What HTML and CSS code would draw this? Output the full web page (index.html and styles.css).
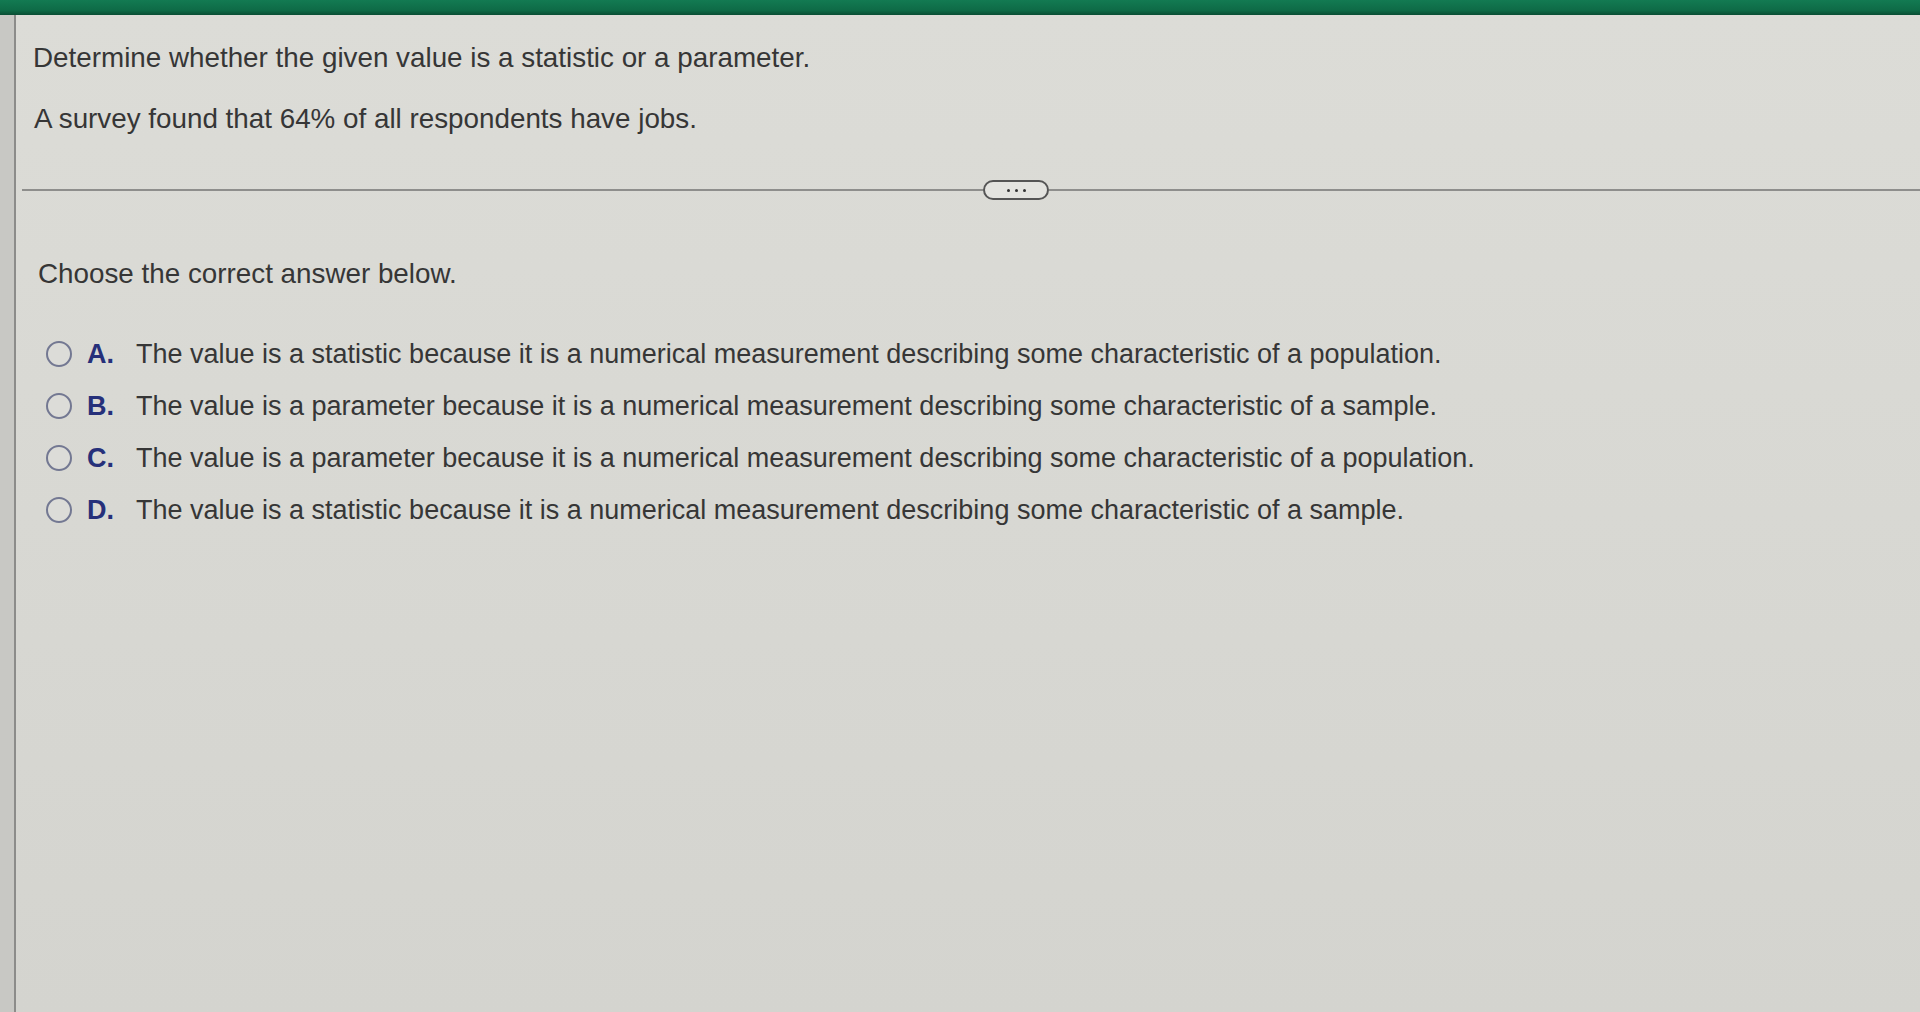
FILE: index.html
```html
<!DOCTYPE html>
<html>
<head>
<meta charset="utf-8">
<link rel="stylesheet" href="styles.css">
</head>
<body>
<div class="topbar"></div>
<div class="frame">
  <div class="edge"></div>
  <div class="content">
    <p class="line header">Determine whether the given value is a statistic or a parameter.</p>
    <p class="line survey">A survey found that 64% of all respondents have jobs.</p>
    <div class="divider">
      <span class="rule rule-left"></span>
      <span class="pill"><i></i><i></i><i></i></span>
      <span class="rule rule-right"></span>
    </div>
    <p class="line choose">Choose the correct answer below.</p>
    <div class="options">
      <div class="option"><span class="radio"></span><span class="letter">A.</span><span class="text">The value is a statistic because it is a numerical measurement describing some characteristic of a population.</span></div>
      <div class="option"><span class="radio"></span><span class="letter">B.</span><span class="text">The value is a parameter because it is a numerical measurement describing some characteristic of a sample.</span></div>
      <div class="option"><span class="radio"></span><span class="letter">C.</span><span class="text">The value is a parameter because it is a numerical measurement describing some characteristic of a population.</span></div>
      <div class="option"><span class="radio"></span><span class="letter">D.</span><span class="text">The value is a statistic because it is a numerical measurement describing some characteristic of a sample.</span></div>
    </div>
  </div>
</div>
</body>
</html>
```

FILE: styles.css
```css
html, body {
  margin: 0;
  padding: 0;
  height: 100%;
}
body {
  background: #d7d7d2;
  font-family: "Liberation Sans", Arial, sans-serif;
  color: #363636;
  overflow: hidden;
}
.topbar {
  height: 15px;
  background: linear-gradient(to bottom, #137a52 0%, #0e6a46 70%, #0a4e34 100%);
}
.frame {
  display: flex;
  height: calc(100% - 15px);
  background: linear-gradient(to bottom, #dcdcd7 0%, #d8d8d3 50%, #d4d4cf 100%);
}
.edge {
  width: 14px;
  flex: none;
  background: #c8c8c4;
  border-right: 2px solid #8c8c8a;
}
.content {
  flex: 1;
  padding-top: 27px;
}
.line {
  margin: 0;
  font-size: 27.8px;
  line-height: 32px;
}
.header {
  padding-left: 17px;
}
.survey {
  margin-top: 29px;
  padding-left: 18px;
}
.divider {
  display: flex;
  align-items: center;
  margin-top: 46px;
  padding-left: 6px;
  height: 18px;
}
.rule {
  height: 2px;
  background: #8e8e8c;
}
.rule-left {
  width: 961px;
}
.rule-right {
  flex: 1;
}
.pill {
  width: 62px;
  height: 16px;
  border: 2px solid #555555;
  border-radius: 10px;
  background: #e4e4e0;
  display: flex;
  align-items: center;
  justify-content: center;
  gap: 5px;
}
.pill i {
  width: 3px;
  height: 3px;
  border-radius: 50%;
  background: #333333;
}
.choose {
  margin-top: 59px;
  padding-left: 22px;
}
.options {
  margin-top: 48px;
  padding-left: 30px;
  display: flex;
  flex-direction: column;
  gap: 20px;
}
.option {
  display: flex;
  align-items: center;
  height: 32px;
  font-size: 27px;
}
.radio {
  width: 22px;
  height: 22px;
  border: 2px solid #737892;
  border-radius: 50%;
  background: #dcdcd8;
  flex: none;
}
.letter {
  margin-left: 15px;
  width: 49px;
  font-weight: bold;
  color: #26307a;
}
.text {
  color: #363636;
}
```
